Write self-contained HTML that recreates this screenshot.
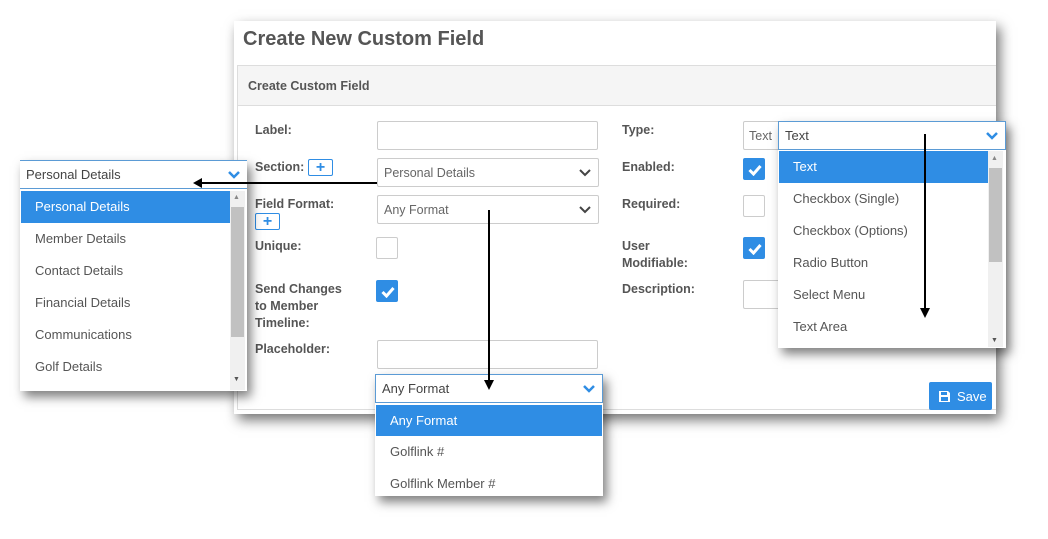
<!DOCTYPE html>
<html><head><style>
*{box-sizing:border-box;margin:0;padding:0}
body{width:1048px;height:539px;background:#fff;font-family:"Liberation Sans",sans-serif;position:relative;overflow:hidden;color:#555}
.abs{position:absolute}
.card{left:234px;top:21px;width:762px;height:393px;background:#fff;box-shadow:4px 6px 12px rgba(0,0,0,.55)}
.title{left:243px;top:28px;font-size:20px;font-weight:bold;color:#555}
.panel{left:237px;top:65px;width:759px;height:345px;border:1px solid #ddd;border-right:none}
.ph{left:237px;top:65px;width:759px;height:41px;background:#f5f5f5;border:1px solid #ddd;border-right:none;font-size:12.5px;font-weight:bold;padding:13px 10px}
.lbl{font-size:12.5px;font-weight:bold;color:#555;line-height:17px}
.inp{border:1px solid #ccc;border-radius:2px;background:#fff;font-size:12.5px;color:#666;padding:7px 6px}
.cb{width:22px;height:22px;border:1px solid #ccc;border-radius:2px;background:#fff}
.cb.on{background:#2f8de4;border-color:#2f8de4}
.cb svg{position:absolute;left:4px;top:5px}
.plus{border:1px solid #2f8de4;border-radius:2px;width:25px;height:17px;color:#2f8de4;text-align:center;font-size:16px;line-height:15px;font-weight:bold}
.dd{background:#fff;box-shadow:4px 6px 10px rgba(0,0,0,.5)}
.sel{border:1px solid #5b9bd5;background:#fff;font-size:13px;color:#444;padding:6px 6px}
.item{height:32px;font-size:13px;color:#555;padding:8px 14px}
.item.hl{background:#2f8de4;color:#fff}
.sb{background:#f0f0f0}
.thumb{background:#c1c1c1}
.chev{position:absolute;right:7px;top:10px}
.arr{background:#000}
</style></head><body>
<div class="abs card"></div>
<div class="abs title">Create New Custom Field</div>
<div class="abs panel"></div>
<div class="abs ph">Create Custom Field</div>

<div class="abs lbl" style="left:255px;top:122px">Label:</div>
<div class="abs inp" style="left:377px;top:121px;width:221px;height:29px"></div>
<div class="abs lbl" style="left:255px;top:159px">Section:</div>
<div class="abs plus" style="left:308px;top:159px">+</div>
<div class="abs inp" style="left:377px;top:158px;width:222px;height:29px">Personal Details<svg class="chev" width="12" height="8" viewBox="0 0 12 8"><path d="M1 1l5 5 5-5" stroke="#444" stroke-width="2" fill="none"/></svg></div>
<div class="abs lbl" style="left:255px;top:196px">Field Format:</div>
<div class="abs plus" style="left:255px;top:213px">+</div>
<div class="abs inp" style="left:377px;top:195px;width:222px;height:29px">Any Format<svg class="chev" width="12" height="8" viewBox="0 0 12 8"><path d="M1 1l5 5 5-5" stroke="#444" stroke-width="2" fill="none"/></svg></div>
<div class="abs lbl" style="left:255px;top:238px">Unique:</div>
<div class="abs cb" style="left:376px;top:237px"></div>
<div class="abs lbl" style="left:255px;top:281px">Send Changes<br>to Member<br>Timeline:</div>
<div class="abs cb on" style="left:376px;top:280px"><svg width="14" height="12" viewBox="0 0 14 12"><path d="M1.5 6l4 4 7-8" stroke="#fff" stroke-width="3" fill="none"/></svg></div>
<div class="abs lbl" style="left:255px;top:341px">Placeholder:</div>
<div class="abs inp" style="left:377px;top:340px;width:221px;height:29px"></div>

<div class="abs lbl" style="left:622px;top:122px">Type:</div>
<div class="abs inp" style="left:743px;top:121px;width:40px;height:29px;padding:7px 5px">Text</div>
<div class="abs lbl" style="left:622px;top:159px">Enabled:</div>
<div class="abs cb on" style="left:743px;top:158px"><svg width="14" height="12" viewBox="0 0 14 12"><path d="M1.5 6l4 4 7-8" stroke="#fff" stroke-width="3" fill="none"/></svg></div>
<div class="abs lbl" style="left:622px;top:196px">Required:</div>
<div class="abs cb" style="left:743px;top:195px"></div>
<div class="abs lbl" style="left:622px;top:238px">User<br>Modifiable:</div>
<div class="abs cb on" style="left:743px;top:237px"><svg width="14" height="12" viewBox="0 0 14 12"><path d="M1.5 6l4 4 7-8" stroke="#fff" stroke-width="3" fill="none"/></svg></div>
<div class="abs lbl" style="left:622px;top:281px">Description:</div>
<div class="abs inp" style="left:743px;top:280px;width:40px;height:29px"></div>

<div class="abs" style="left:929px;top:382px;width:63px;height:28px;background:#2f8de4;border-radius:2px;color:#fff;font-size:13px;padding:7px 0 0 28px"><svg class="abs" style="left:9px;top:8px" width="13" height="13" viewBox="0 0 13 13"><path d="M1 1h9l2 2v9H1z" fill="#fff"/><rect x="3" y="2" width="6" height="3" fill="#2f8de4"/><rect x="3" y="7" width="7" height="4" fill="#2f8de4"/></svg>Save</div>

<!-- left dropdown -->
<div class="abs dd" style="left:20px;top:160px;width:227px;height:231px"></div>
<div class="abs sel" style="left:20px;top:160px;width:227px;height:29px;border-width:1px 0 1px 0">Personal Details<svg class="chev" width="12" height="8" viewBox="0 0 12 8"><path d="M1 1l5 5 5-5" stroke="#2f8de4" stroke-width="2.5" fill="none"/></svg></div>
<div class="abs" style="left:21px;top:191px;width:209px">
<div class="item hl">Personal Details</div><div class="item">Member Details</div><div class="item">Contact Details</div><div class="item">Financial Details</div><div class="item">Communications</div><div class="item">Golf Details</div></div>
<div class="abs sb" style="left:230px;top:191px;width:15px;height:199px"></div>
<div class="abs thumb" style="left:231px;top:207px;width:13px;height:130px"></div>
<div class="abs" style="left:233px;top:194px;font-size:7px;color:#888">▲</div>
<div class="abs" style="left:233px;top:376px;font-size:7px;color:#555">▼</div>

<!-- bottom dropdown -->
<div class="abs dd" style="left:375px;top:374px;width:228px;height:122px"></div>
<div class="abs sel" style="left:375px;top:374px;width:228px;height:29px">Any Format<svg class="chev" width="12" height="8" viewBox="0 0 12 8"><path d="M1 1l5 5 5-5" stroke="#2f8de4" stroke-width="2.5" fill="none"/></svg></div>
<div class="abs" style="left:376px;top:405px;width:226px">
<div class="item hl" style="height:31px">Any Format</div><div class="item">Golflink #</div><div class="item">Golflink Member #</div></div>

<!-- right dropdown -->
<div class="abs dd" style="left:778px;top:121px;width:228px;height:227px"></div>
<div class="abs sel" style="left:778px;top:121px;width:228px;height:29px">Text<svg class="chev" width="12" height="8" viewBox="0 0 12 8"><path d="M1 1l5 5 5-5" stroke="#2f8de4" stroke-width="2.5" fill="none"/></svg></div>
<div class="abs" style="left:779px;top:151px;width:209px">
<div class="item hl">Text</div><div class="item">Checkbox (Single)</div><div class="item">Checkbox (Options)</div><div class="item">Radio Button</div><div class="item">Select Menu</div><div class="item">Text Area</div></div>
<div class="abs sb" style="left:988px;top:151px;width:15px;height:196px"></div>
<div class="abs thumb" style="left:989px;top:168px;width:13px;height:94px"></div>
<div class="abs" style="left:991px;top:155px;font-size:7px;color:#888">▲</div>
<div class="abs" style="left:991px;top:337px;font-size:7px;color:#555">▼</div>

<!-- arrows -->
<div class="abs arr" style="left:200px;top:182px;width:177px;height:2px"></div>
<div class="abs" style="left:193px;top:178px;width:0;height:0;border-top:5px solid transparent;border-bottom:5px solid transparent;border-right:9px solid #000"></div>
<div class="abs arr" style="left:488px;top:210px;width:2px;height:172px"></div>
<div class="abs" style="left:484px;top:380px;width:0;height:0;border-left:5px solid transparent;border-right:5px solid transparent;border-top:10px solid #000"></div>
<div class="abs arr" style="left:924px;top:134px;width:2px;height:175px"></div>
<div class="abs" style="left:920px;top:308px;width:0;height:0;border-left:5px solid transparent;border-right:5px solid transparent;border-top:10px solid #000"></div>
</body></html>
